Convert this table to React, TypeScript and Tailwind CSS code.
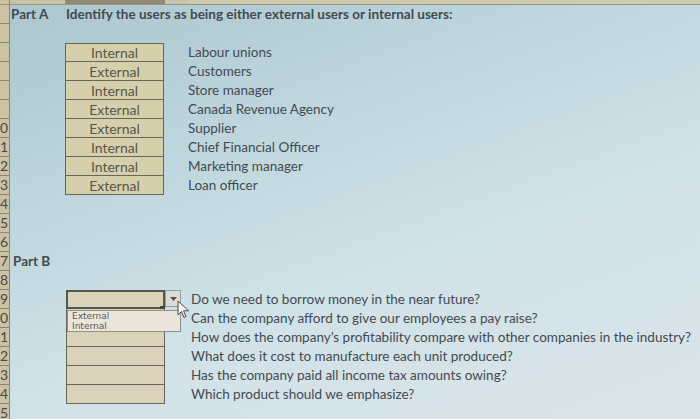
import React from "react";

const partA: [string, string][] = [
  ["Internal", "Labour unions"],
  ["External", "Customers"],
  ["Internal", "Store manager"],
  ["External", "Canada Revenue Agency"],
  ["External", "Supplier"],
  ["Internal", "Chief Financial Officer"],
  ["Internal", "Marketing manager"],
  ["External", "Loan officer"],
];

const partB = [
  "Do we need to borrow money in the near future?",
  "Can the company afford to give our employees a pay raise?",
  "How does the company\u2019s profitability compare with other companies in the industry?",
  "What does it cost to manufacture each unit produced?",
  "Has the company paid all income tax amounts owing?",
  "Which product should we emphasize?",
];

function Hdr({ n }: { n: string }) {
  return (
    <div className="w-[10px] h-full shrink-0 bg-[#cbc2a4] border-r border-b border-[#8c8670] overflow-hidden flex items-center justify-end text-[14px] leading-none text-[#4a4a48]">
      <span className="pr-[1px]">{n}</span>
    </div>
  );
}

function Row({
  n,
  children,
}: {
  n: string;
  children?: React.ReactNode;
}) {
  return (
    <div className="flex h-[19px] items-stretch">
      <Hdr n={n} />
      <div className="flex-1 flex items-center relative">{children}</div>
    </div>
  );
}

export default function App() {
  return (
    <div
      className="w-[700px] h-[419px] overflow-hidden relative bg-[linear-gradient(160deg,#abc6cd_0%,#c0d7de_35%,#d0e2e8_60%,#dbe4e8_100%)] text-[#434a51]"
      style={{ fontFamily: "Lato, 'Open Sans', sans-serif" }}
    >
      {/* top partial row */}
      <div className="flex h-[4px]">
        <div className="w-[10px] bg-[#cbc2a4] border-r border-[#8c8670]" />
        <div className="w-[55px] bg-[#c9c3a8]" />
        <div className="w-[100px] bg-[#8f8a78]" />
        <div className="w-[22px] bg-[#c9c3a8]" />
        <div className="flex-1 bg-[#cfc9ae]" />
      </div>
      <div className="h-[1px] bg-[#9a9684]" />

      <Row n="">
        <span className="pl-[1px] w-[56px] text-[13.5px] font-bold">Part A</span>
        <span className="text-[13.5px] font-bold">
          Identify the users as being either external users or internal users:
        </span>
      </Row>
      <Row n="" />

      {partA.map(([v, label], i) => (
        <Row key={i} n={i >= 4 ? String(i - 4) : ""}>
          <div className="w-[55px]" />
          <div
            className={`w-[99px] h-full bg-[#d6cfab] border-x border-[#66665f] border-b ${
              i === 0 ? "border-t" : ""
            } flex items-center justify-center text-[14px] text-[#57574f]`}
          >
            {v}
          </div>
          <div className="pl-[24px] text-[13.5px]">{label}</div>
        </Row>
      ))}

      <Row n="4" />
      <Row n="5" />
      <Row n="6" />
      <Row n="7">
        <span className="pl-[3px] text-[13.5px] font-bold">Part B</span>
      </Row>
      <Row n="8" />

      {partB.map((q, i) => (
        <Row key={i} n={String((i + 9) % 10)}>
          <div className="w-[56px]" />
          <div
            className={`w-[99px] h-full bg-[#dad3ba] ${
              i === 0
                ? "border-2 border-[#4f5a4c]"
                : "border-x border-b border-[#66665f]"
            } relative`}
          >
            {i === 0 && (
              <>
                <div className="absolute right-[-2px] bottom-[-3px] w-[5px] h-[4px] bg-[#3d4a3c]" />
                <div className="absolute left-[97px] top-[-2px] w-[16px] h-[17px] bg-[#dcdcd6] border border-[#9a9a96] flex items-center justify-center">
                  <svg width="7" height="4" viewBox="0 0 7 4">
                    <path d="M0 0 H7 L3.5 4 Z" fill="#555" />
                  </svg>
                </div>
                <div
                  className="absolute left-[-1px] top-[18px] w-[114px] h-[22px] bg-[#ebe6dc] border border-[#8e8e8a] z-10 flex flex-col justify-center pl-[4px] text-[9px] leading-[10px] text-[#5a5650]"
                  style={{ fontFamily: "'DejaVu Sans', sans-serif" }}
                >
                  <span>External</span>
                  <span>Internal</span>
                </div>
              </>
            )}
          </div>
          <div className="pl-[26px] text-[13.5px] whitespace-nowrap">{q}</div>
        </Row>
      ))}
      <Row n="5" />

      {/* mouse cursor */}
      <svg
        className="absolute left-[177px] top-[300px] z-20"
        width="14"
        height="20"
        viewBox="0 0 14 20"
      >
        <path
          d="M1 1 L1 15 L4.5 11.5 L7 17.5 L9 16.6 L6.6 10.8 L11.5 10.8 Z"
          fill="#f4f4f4"
          stroke="#4a4a4a"
          strokeWidth="1"
          strokeLinejoin="round"
        />
      </svg>
    </div>
  );
}
